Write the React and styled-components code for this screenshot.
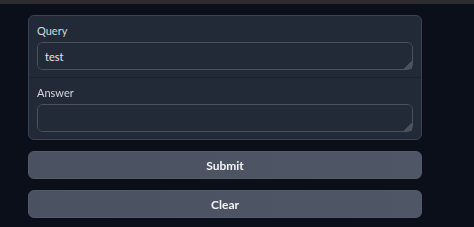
import React, { useState } from 'react';
import styled, { createGlobalStyle } from 'styled-components';

const Global = createGlobalStyle`
  html, body {
    margin: 0;
    padding: 0;
    background: #0b0f19;
    font-family: "Source Sans Pro", Lato, "Noto Sans", sans-serif;
  }
`;

const Page = styled.div`
  width: 474px;
  height: 227px;
  overflow: hidden;
  background: #0b0f19;
  border-top: 4px solid #2c2c2e;
  box-sizing: border-box;
`;

const Column = styled.div`
  width: 394px;
  margin-left: 28px;
  padding-top: 11px;
  display: flex;
  flex-direction: column;
  gap: 11px;
`;

const Form = styled.div`
  background: #222a38;
  border: 1px solid #3b4454;
  border-radius: 6px;
  overflow: hidden;
  display: flex;
  flex-direction: column;
`;

const Field = styled.label`
  display: flex;
  flex-direction: column;
  padding: 8px 8px 7px 8px;
  & + & {
    border-top: 1px solid #1a202d;
  }
`;

const Label = styled.span`
  font-size: 11px;
  color: #d4d7dc;
  margin-bottom: 5px;
  line-height: 13px;
`;

const Area = styled.textarea`
  height: 28px;
  box-sizing: border-box;
  background: #222937;
  border: 1px solid #4a5262;
  border-radius: 6px;
  color: #e5e7eb;
  font-family: inherit;
  font-size: 11px;
  padding: 7px 7px;
  resize: vertical;
  outline: none;
  &::-webkit-resizer {
    background: linear-gradient(135deg, transparent 72%, #4a5262 72%);
  }
`;

const Button = styled.button`
  height: 28px;
  border: 1px solid #535b69;
  border-radius: 6px;
  background: linear-gradient(to right, #4a5160, #4f5665);
  color: #f3f4f6;
  font-family: inherit;
  font-weight: 700;
  font-size: 12px;
  cursor: pointer;
`;

export default function App() {
  const [query, setQuery] = useState('test');
  const [answer, setAnswer] = useState('');
  return (
    <Page>
      <Global />
      <Column>
        <Form>
          <Field>
            <Label>Query</Label>
            <Area rows={1} value={query} onChange={(e) => setQuery(e.target.value)} />
          </Field>
          <Field>
            <Label>Answer</Label>
            <Area rows={1} value={answer} onChange={(e) => setAnswer(e.target.value)} />
          </Field>
        </Form>
        <Button>Submit</Button>
        <Button onClick={() => { setQuery(''); setAnswer(''); }}>Clear</Button>
      </Column>
    </Page>
  );
}
